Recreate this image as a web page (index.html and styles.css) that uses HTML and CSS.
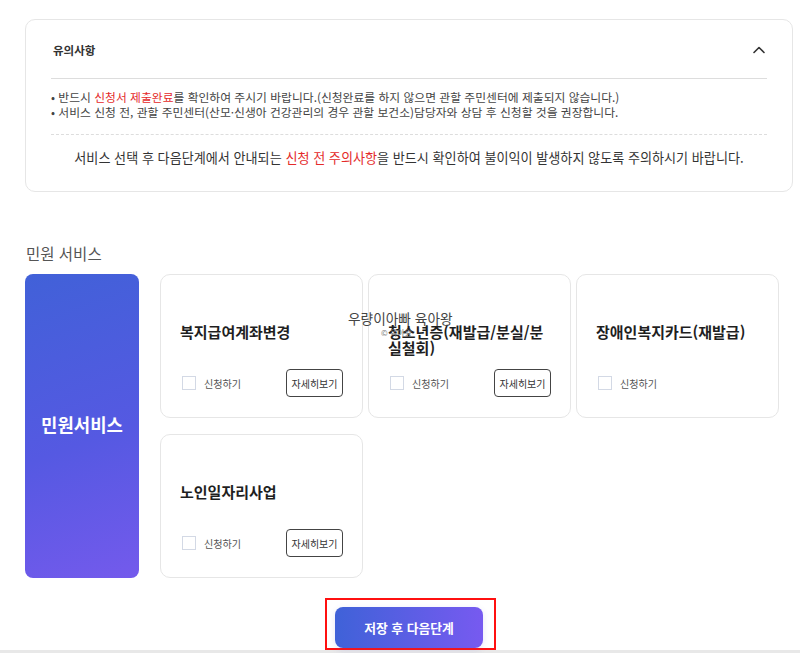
FILE: index.html
```html
<!DOCTYPE html>
<html lang="ko">
<head>
  <meta charset="UTF-8">
  <meta name="viewport" content="width=device-width, initial-scale=1.0">
  <title>민원 서비스 신청</title>
  <link rel="stylesheet" href="styles.css">
</head>
<body>
  <div class="page">
    <div class="notice">
      <div class="notice-header">
        <h2 class="notice-title">유의사항</h2>
        <button class="fold-btn" aria-label="접기">
          <svg width="12" height="8" viewBox="0 0 12 8" fill="none" stroke="currentColor" stroke-width="1.6">
            <path d="M1 6.5L6 1.5l5 5" stroke-linecap="round" stroke-linejoin="round"/>
          </svg>
        </button>
      </div>
      <ul class="notice-list">
        <li>반드시 <em>신청서 제출완료</em>를 확인하여 주시기 바랍니다.(신청완료를 하지 않으면 관할 주민센터에 제출되지 않습니다.)</li>
        <li>서비스 신청 전, 관할 주민센터(산모·신생아 건강관리의 경우 관할 보건소)담당자와 상담 후 신청할 것을 권장합니다.</li>
      </ul>
      <p class="notice-guide">서비스 선택 후 다음단계에서 안내되는 <em>신청 전 주의사항</em>을 반드시 확인하여 불이익이 발생하지 않도록 주의하시기 바랍니다.</p>
    </div>

    <h3 class="section-title">민원 서비스</h3>
    <div class="services">
      <div class="service-banner">민원서비스</div>
      <div class="service-grid">
        <div class="service-card">
          <div class="card-title">복지급여계좌변경</div>
          <div class="card-footer">
            <label class="apply"><span class="check"></span>신청하기</label>
            <button class="detail-btn">자세히보기</button>
          </div>
        </div>
        <div class="service-card">
          <div class="card-title">청소년증(재발급/분실/분실철회)</div>
          <div class="card-footer">
            <label class="apply"><span class="check"></span>신청하기</label>
            <button class="detail-btn">자세히보기</button>
          </div>
        </div>
        <div class="service-card">
          <div class="card-title">장애인복지카드(재발급)</div>
          <div class="card-footer">
            <label class="apply"><span class="check"></span>신청하기</label>
          </div>
        </div>
        <div class="service-card">
          <div class="card-title">노인일자리사업</div>
          <div class="card-footer">
            <label class="apply"><span class="check"></span>신청하기</label>
            <button class="detail-btn">자세히보기</button>
          </div>
        </div>
      </div>
      <div class="watermark">
        <div class="wm-name">우량이아빠 육아왕</div>
        <div class="wm-copy">© 육아왕</div>
      </div>
    </div>

    <div class="actions">
      <span class="highlight">
        <button class="next-btn">저장 후 다음단계</button>
      </span>
    </div>
  </div>
  <div class="footer-line"></div>
</body>
</html>
```

FILE: styles.css
```css
:root {
  --text-primary: #1f1f1f;
  --text-body: #444444;
  --text-muted: #555555;
  --border-color: #e6e6e6;
  --accent-red: #e42a2a;
  --grad-start: #3f62d8;
  --grad-end: #775af0;
}

* {
  box-sizing: border-box;
  margin: 0;
  padding: 0;
}

body {
  width: 800px;
  height: 653px;
  overflow: hidden;
  font-family: "Noto Sans CJK KR", "Noto Sans", sans-serif;
  color: var(--text-primary);
  background: #ffffff;
}

.page {
  padding: 19px 0 0 25px;
  width: 793px;
}

/* 유의사항 */
.notice {
  border: 1px solid var(--border-color);
  border-radius: 10px;
  padding: 0 25px 24px;
}

.notice-header {
  display: flex;
  justify-content: space-between;
  align-items: center;
  padding: 21px 0 19px 2px;
  border-bottom: 1px solid #dddddd;
}

.notice-title {
  font-size: 11.5px;
  font-weight: 700;
  line-height: 18px;
  color: #333333;
}

.fold-btn {
  background: none;
  border: none;
  color: #333333;
  display: flex;
  margin-right: 2px;
}

.notice-list {
  list-style: none;
  padding: 10px 0 15px;
  border-bottom: 1px dashed #dddddd;
}

.notice-list li {
  font-size: 11.8px;
  line-height: 15px;
  color: var(--text-body);
  white-space: nowrap;
}

.notice-list li::before {
  content: "• ";
}

.notice em,
.notice-guide em {
  font-style: normal;
  color: var(--accent-red);
}

.notice-guide {
  padding-top: 14px;
  font-size: 13.1px;
  line-height: 18px;
  color: #333333;
  text-align: center;
  white-space: nowrap;
}

/* 민원 서비스 */
.section-title {
  margin-top: 51px;
  font-size: 15.5px;
  font-weight: 400;
  line-height: 20px;
  color: var(--text-muted);
  padding-left: 1px;
}

.services {
  position: relative;
  display: flex;
  gap: 21px;
  margin-top: 11px;
}

.service-banner {
  width: 114px;
  height: 304px;
  border-radius: 8px;
  background: linear-gradient(160deg, #4161d8 0%, #5559e2 55%, #745aec 100%);
  color: #ffffff;
  font-size: 17.8px;
  font-weight: 700;
  display: flex;
  align-items: center;
  justify-content: center;
  padding-bottom: 4px;
}

.service-grid {
  display: grid;
  grid-template-columns: repeat(3, 203px);
  grid-auto-rows: 144px;
  column-gap: 5px;
  row-gap: 16px;
}

.service-card {
  border: 1px solid var(--border-color);
  border-radius: 10px;
  padding: 49px 19px 20px;
  display: flex;
  flex-direction: column;
  justify-content: space-between;
}

.card-title {
  font-size: 15px;
  font-weight: 700;
  line-height: 16px;
  color: var(--text-primary);
}

.card-footer {
  display: flex;
  justify-content: space-between;
  align-items: center;
  min-height: 28px;
}

.apply {
  display: flex;
  align-items: center;
  gap: 8px;
  font-size: 10.1px;
  color: var(--text-muted);
  padding-left: 2px;
}

.check {
  width: 14px;
  height: 14px;
  border: 1px solid #d3d9e5;
  background: #ffffff;
}

.detail-btn {
  width: 57px;
  height: 28px;
  border: 1px solid #444444;
  border-radius: 4px;
  background: #ffffff;
  font-family: inherit;
  font-size: 10px;
  color: #333333;
}

.watermark {
  position: absolute;
  left: 323px;
  top: 36px;
  pointer-events: none;
}

.wm-name {
  font-size: 13.7px;
  line-height: 16px;
  color: #444444;
}

.wm-copy {
  font-size: 8px;
  line-height: 12px;
  color: #777777;
  padding-left: 33px;
  margin-top: 1px;
}

/* 하단 버튼 */
.actions {
  display: flex;
  justify-content: center;
  margin-top: 20px;
  padding-left: 3px;
}

.highlight {
  display: inline-flex;
  border: 2px solid #ff1010;
  padding: 7px 11px 0 8px;
}

.next-btn {
  width: 148px;
  height: 41px;
  border: none;
  border-radius: 8px;
  background: linear-gradient(90deg, var(--grad-start), var(--grad-end));
  color: #ffffff;
  font-family: inherit;
  font-size: 12.8px;
  font-weight: 700;
  box-shadow: 0 2px 6px rgba(90, 90, 200, 0.15);
}

.footer-line {
  height: 3px;
  background: #e8e8e8;
}
```
